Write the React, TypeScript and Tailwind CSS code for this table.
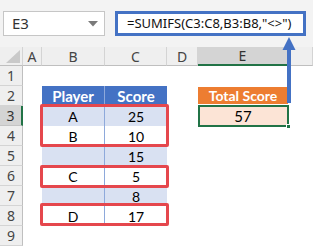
export default function App() {
  const rows = [1, 2, 3, 4, 5, 6, 7, 8, 9];
  const data: Record<number, [string, string]> = {
    3: ["A", "25"],
    4: ["B", "10"],
    5: ["", "15"],
    6: ["C", "5"],
    7: ["", "8"],
    8: ["D", "17"],
  };
  const colHead = "flex items-center justify-center bg-[#efefef] border-r border-b border-r-[#d4d4d4] border-b-[#bfbfbf] text-[14px] text-[#444] font-['Noto_Sans',sans-serif]";
  const rowHead = "flex items-center justify-center bg-[#efefef] border-r border-b border-r-[#bfbfbf] border-b-[#d4d4d4] text-[14px] text-[#444] font-['Noto_Sans',sans-serif]";
  const cellFont = "font-['Lato',sans-serif] text-[14px]";
  return (
    <div className="relative w-[313px] h-[246px] overflow-hidden bg-white">
      <div className="h-[47px] bg-[#f3f3f3] flex items-start pt-[11px] pl-[3px]">
        <div className="w-[102px] h-[25px] bg-white border border-[#c6c6c6] flex items-center justify-between pl-[8px] pr-[6px]">
          <span className="text-[15px] text-[#333] font-['Noto_Sans',sans-serif] leading-none">E3</span>
          <svg width="10" height="6" viewBox="0 0 10 6">
            <polygon points="0,0 10,0 5,5.5" fill="#7a7a7a" />
          </svg>
        </div>
        <div className="ml-[10px] w-[191px] h-[25px] bg-white border-[3px] border-[#4472c4] flex items-center pl-[9px]">
          <span className="text-[13px] text-[#111] font-['Noto_Sans',sans-serif] leading-none whitespace-nowrap">
            =SUMIFS(C3:C8,B3:B8,"&lt;&gt;")
          </span>
        </div>
      </div>
      <div className="grid grid-cols-[23px_19px_63px_62px_31px_90px_25px] grid-rows-[19px_repeat(9,20px)]">
        <div className="relative bg-[#efefef] border-r border-b border-r-[#d4d4d4] border-b-[#bfbfbf]">
          <svg className="absolute left-[6px] top-[3px]" width="15" height="14" viewBox="0 0 15 14">
            <polygon points="14,0 14,13 0,13" fill="#c9c9c9" />
          </svg>
        </div>
        <div className={colHead}>A</div>
        <div className={colHead}>B</div>
        <div className={colHead}>C</div>
        <div className={colHead}>D</div>
        <div className="flex items-center justify-center bg-[#d4d4d4] border-r border-r-[#c4c4c4] border-b-2 border-b-[#217346] text-[14px] text-[#333] font-['Noto_Sans',sans-serif]">E</div>
        <div className={colHead}></div>

        {rows.map((r) => {
          const isSel = r === 3;
          const band = r === 3 || r === 5 || r === 7;
          const d = data[r];
          return (
            <div key={r} className="contents">
              <div
                className={
                  isSel
                    ? "flex items-center justify-center bg-[#d4d4d4] border-b border-b-[#c4c4c4] border-r-2 border-r-[#217346] text-[14px] text-[#333] font-['Noto_Sans',sans-serif]"
                    : rowHead
                }
              >
                {r}
              </div>
              <div></div>
              {r === 2 ? (
                <>
                  <div className={`flex items-center justify-center bg-[#4472c4] text-white font-bold border-r border-r-[#8ea9db] ${cellFont} text-[15px]`}>Player</div>
                  <div className={`flex items-center justify-center bg-[#4472c4] text-white font-bold ${cellFont} text-[15px]`}>Score</div>
                </>
              ) : d ? (
                <>
                  <div className={`flex items-center justify-center ${band ? "bg-[#d9e1f2]" : "bg-white"} border-r border-r-[#8ea9db] text-black ${cellFont}`}>{d[0]}</div>
                  <div className={`flex items-center justify-center ${band ? "bg-[#d9e1f2]" : "bg-white"} text-black ${cellFont}`}>{d[1]}</div>
                </>
              ) : (
                <>
                  <div></div>
                  <div></div>
                </>
              )}
              <div></div>
              {r === 2 ? (
                <div className="pt-[1px] pb-[2px]">
                  <div className={`h-full flex items-center justify-center bg-[#ed7d31] text-white font-bold ${cellFont} text-[14px]`}>Total Score</div>
                </div>
              ) : r === 3 ? (
                <div className={`flex items-center justify-center bg-[#fce4d6] text-black ${cellFont} text-[15px]`}>57</div>
              ) : (
                <div></div>
              )}
              <div></div>
            </div>
          );
        })}
      </div>

      {/* selection border on E3 */}
      <div className="absolute left-[198px] top-[105px] w-[91px] h-[22px] border-2 border-[#217346] pointer-events-none" />
      <div className="absolute left-[286px] top-[124px] w-[5px] h-[5px] bg-[#217346] border border-white" />

      {/* red highlight boxes */}
      <div className="absolute left-[40px] top-[104px] w-[129px] h-[43px] border-[3px] border-[#e5474d] rounded-[2px]" />
      <div className="absolute left-[40px] top-[165px] w-[129px] h-[23px] border-[3px] border-[#e5474d] rounded-[2px]" />
      <div className="absolute left-[40px] top-[203px] w-[129px] h-[23px] border-[3px] border-[#e5474d] rounded-[2px]" />

      {/* arrow */}
      <svg className="absolute left-[280px] top-[34px]" width="20" height="72" viewBox="0 0 20 72">
        <rect x="7" y="14" width="4" height="55" fill="#4472c4" />
        <polygon points="2.5,16 15.5,16 9,3" fill="#4472c4" />
      </svg>
    </div>
  );
}
